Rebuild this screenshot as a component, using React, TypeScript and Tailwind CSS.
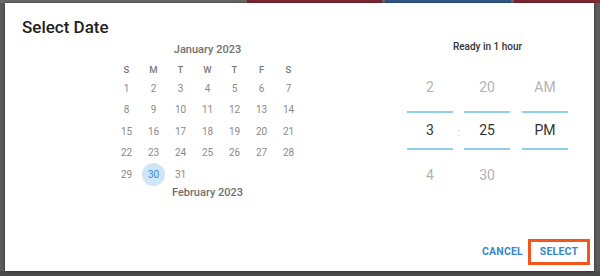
import React from 'react'

const WEEKDAYS = ['S', 'M', 'T', 'W', 'T', 'F', 'S']

// January 2023 starts on a Sunday
const WEEKS: (number | null)[][] = [
    [1, 2, 3, 4, 5, 6, 7],
    [8, 9, 10, 11, 12, 13, 14],
    [15, 16, 17, 18, 19, 20, 21],
    [22, 23, 24, 25, 26, 27, 28],
    [29, 30, 31, null, null, null, null],
]

const SELECTED_DAY = 30

const font = { fontFamily: 'Roboto, "Liberation Sans", sans-serif' }

function TimeColumn({ prev, current, next }: { prev: string; current: string; next: string }) {
    return (
        <div className="w-[46px] flex flex-col items-center">
            <div className="h-[48px] w-full flex items-center justify-center text-[14px] text-[#b3b3b3]">{prev}</div>
            <div className="h-[39px] w-full flex items-center justify-center border-y-2 border-[#8fd0e8] text-[14px] text-[#333]">
                {current}
            </div>
            <div className="h-[50px] w-full flex items-center justify-center text-[14px] text-[#b3b3b3]">{next}</div>
        </div>
    )
}

export default function App() {
    return (
        <div className="relative h-[276px] w-[600px] bg-[#5c5c5c] overflow-hidden" style={font}>
            {/* page underneath the overlay */}
            <div className="absolute top-0 left-0 right-0 h-[3px] flex">
                <div className="w-[247px] bg-[#6a6a6a]" />
                <div className="w-[135px] bg-[#7d2a35]" />
                <div className="w-[3px] bg-[#6a6a6a]" />
                <div className="w-[126px] bg-[#33598a]" />
                <div className="w-[3px] bg-[#6a6a6a]" />
                <div className="flex-1 bg-[#7d2a35]" />
            </div>
            <div className="absolute bottom-0 left-0 right-0 h-[5px] bg-[#4a4a4a]" />

            <div className="relative ml-[5px] mt-[3px] w-[589px] h-[268px] bg-white shadow-[0_0_3px_rgba(0,0,0,0.5)] flex flex-col">
                <div className="pl-[17px] pt-[14px] h-[33px] text-[17px] leading-[20px] font-medium text-[#222]">
                    Select Date
                </div>

                <div className="flex">
                    {/* calendar */}
                    <div className="ml-[108px] w-[189px] flex flex-col">
                        <div className="mt-[6px] h-[16px] leading-[16px] text-center text-[11px] font-medium text-[#707070]">
                            January 2023
                        </div>
                        <div className="mt-[4.75px] h-[14.5px] grid grid-cols-7">
                            {WEEKDAYS.map((d, i) => (
                                <div key={i} className="flex items-center justify-center text-[9.5px] font-medium text-[#7a7a7a]">
                                    {d}
                                </div>
                            ))}
                        </div>
                        {WEEKS.map((week, wi) => (
                            <div key={wi} className="h-[21.5px] grid grid-cols-7">
                                {week.map((day, di) => (
                                    <div key={di} className="flex items-center justify-center">
                                        {day === SELECTED_DAY ? (
                                            <div className="w-[23px] h-[23px] shrink-0 rounded-full bg-[#cfe6f8] flex items-center justify-center text-[10px] text-[#3d8bd3]">
                                                {day}
                                            </div>
                                        ) : (
                                            <span className="text-[10px] text-[#8a8a8a]">{day ?? ''}</span>
                                        )}
                                    </div>
                                ))}
                            </div>
                        ))}
                        <div className="h-[16px] leading-[16px] text-center text-[11px] font-medium text-[#707070]">
                            February 2023
                        </div>
                    </div>

                    {/* time picker */}
                    <div className="ml-[105px] w-[161px] flex flex-col">
                        <div className="mt-[4px] h-[14px] leading-[14px] text-center text-[10px] font-medium text-[#333]">
                            Ready in 1 hour
                        </div>
                        <div className="mt-[9px] flex">
                            <TimeColumn prev="2" current="3" next="4" />
                            <div className="w-[11px] h-[137px] flex items-center justify-center text-[11px] text-[#c4c4c4] pt-[3px]">
                                :
                            </div>
                            <TimeColumn prev="20" current="25" next="30" />
                            <div className="w-[12px]" />
                            <TimeColumn prev="AM" current="PM" next="" />
                        </div>
                    </div>
                </div>

                <div className="mt-auto mb-[6px] mr-[4px] flex justify-end items-center gap-[5px]">
                    <button className="h-[26px] text-[10.5px] font-bold text-[#3b86c6] tracking-[0.2px]">CANCEL</button>
                    <button className="h-[26px] w-[62px] border-[3px] border-[#f2561d] text-[10.5px] font-bold text-[#3b86c6] tracking-[0.2px]">
                        SELECT
                    </button>
                </div>
            </div>
        </div>
    )
}
